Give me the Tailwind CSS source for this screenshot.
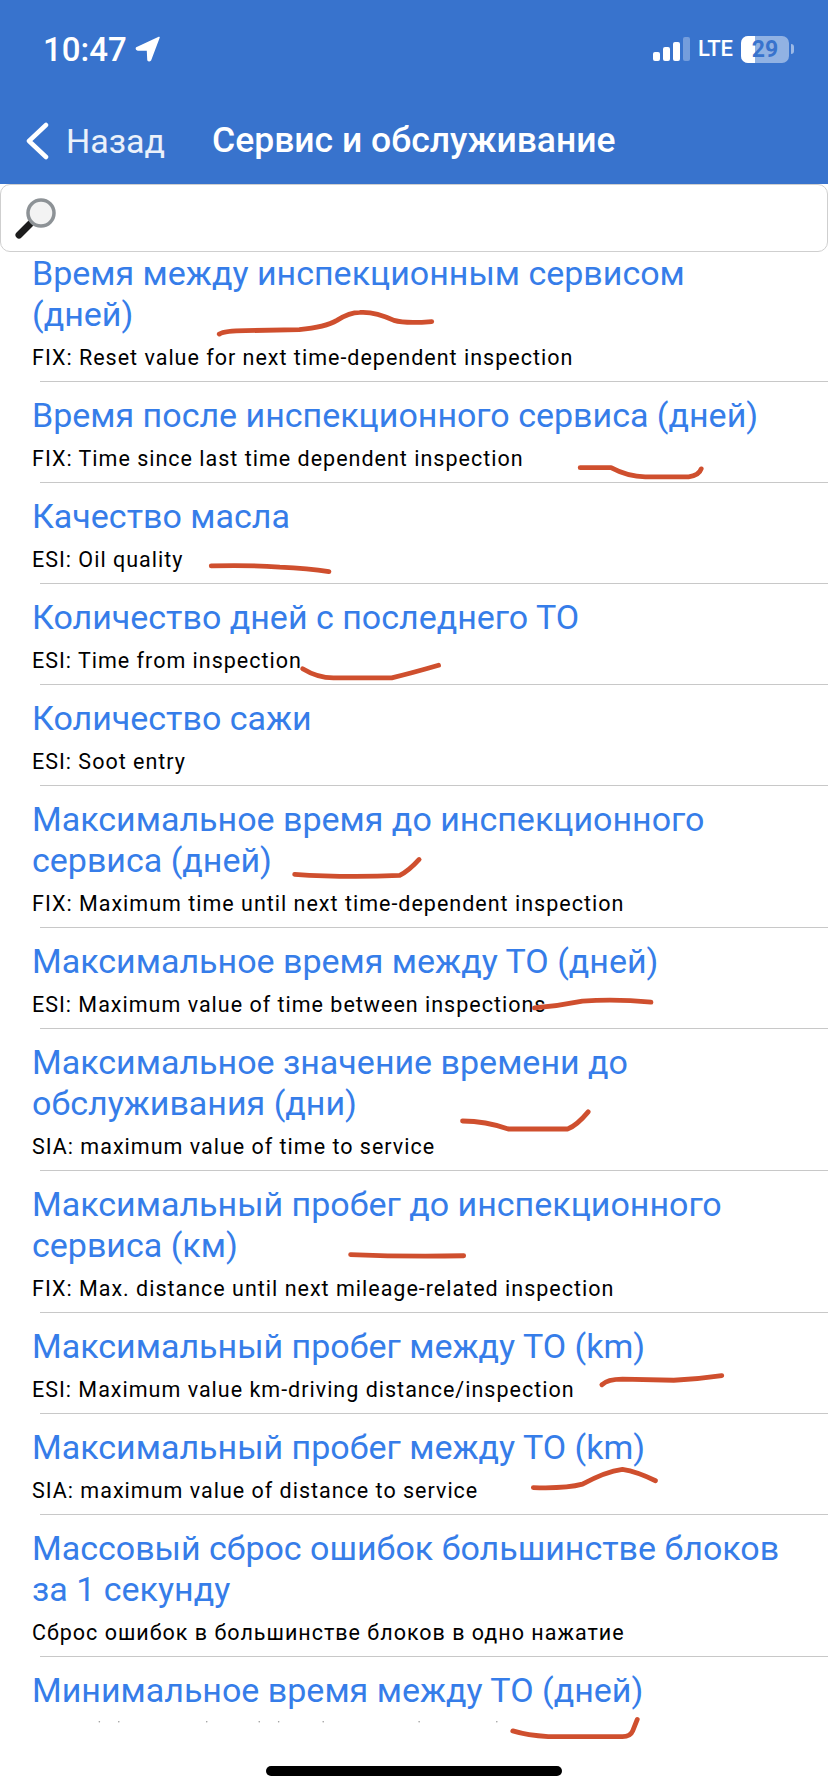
<!DOCTYPE html>
<html lang="ru">
<head>
  <meta charset="UTF-8" />
  <meta name="viewport" content="width=device-width, initial-scale=1.0"/>
  <title>Сервис и обслуживание</title>
  <script src="https://cdn.jsdelivr.net/npm/@tailwindcss/browser@4"></script>
</head>
<body class="bg-white font-['Roboto',sans-serif]">
<div class="relative w-[828px] h-[1792px] overflow-hidden bg-white">

  <!-- status bar + nav -->
  <header class="h-[184px] bg-[#3873cd] text-white flex flex-col">
    <div class="h-[98px] flex items-center justify-between pl-[43px] pr-[34px]">
      <div class="flex items-center gap-[8px]">
        <span class="text-[33px] font-medium leading-none">10:47</span>
        <svg width="26" height="26" viewBox="0 0 26 26"><path d="M24 1.5 L1.5 12 Q1 13.5 3 14 L12.5 14 L13 24 Q14 25.5 15.5 24 Z" fill="#fff" stroke="#fff" stroke-linejoin="round" stroke-width="1.5"/></svg>
      </div>
      <div class="flex items-center">
        <div class="flex items-end gap-[3px] h-[24px]">
          <div class="w-[7px] h-[9px] rounded-[2px] bg-white"></div>
          <div class="w-[7px] h-[14px] rounded-[2px] bg-white"></div>
          <div class="w-[7px] h-[19px] rounded-[2px] bg-white"></div>
          <div class="w-[7px] h-[24px] rounded-[2px] bg-white/30"></div>
        </div>
        <span class="ml-[8px] text-[22px] font-medium leading-none">LTE</span>
        <div class="relative ml-[8px] w-[48px] h-[27px] rounded-[7px] overflow-hidden bg-white/45 flex items-center justify-center">
          <div class="absolute left-0 top-0 bottom-0 w-[14px] bg-white"></div>
          <span class="relative text-[23px] font-bold leading-none text-[#3873cd]">29</span>
        </div>
        <div class="ml-[2px] w-[3px] h-[10px] rounded-r-full bg-white/50"></div>
      </div>
    </div>
    <nav class="flex items-center h-[50px] pl-[24px] mt-[18px]">
      <svg width="26" height="38" viewBox="0 0 26 38" fill="none"><path d="M22 3 L5 19 L22 35" stroke="#fff" stroke-width="4.5" stroke-linecap="round" stroke-linejoin="round"/></svg>
      <span class="ml-[16px] text-[34px] leading-none text-white/90">Назад</span>
      <span class="ml-[47px] text-[35.5px] font-medium leading-none">Сервис и обслуживание</span>
    </nav>
  </header>

  <!-- search -->
  <div class="h-[68px] bg-white border border-[#cfcfcf] rounded-[10px] flex items-center pl-[14px]">
    <svg width="44" height="44" viewBox="0 0 44 44">
      <path d="M15 28 L4 39" stroke="#1c1c1c" stroke-width="7" stroke-linecap="round"/>
      <circle cx="26" cy="17" r="13" fill="#f3f3f3" stroke="#8d9296" stroke-width="3.5"/>
    </svg>
  </div>

  <!-- list -->
  <ul class="pl-[40px]">
    <li class="pt-[1px] pb-[9px] border-b border-[#c8c8c8]">
      <p class="-ml-[8px] text-[34px] leading-[40.5px] text-[#367de9]">Время между инспекционным сервисом<br>(дней)</p>
      <p class="-ml-[8px] mt-[10px] text-[21.5px] leading-[28px] tracking-[1px] text-black">FIX: Reset value for next time-dependent inspection</p>
    </li>
    <li class="pt-[13px] pb-[9px] border-b border-[#c8c8c8]">
      <p class="-ml-[8px] text-[34px] leading-[40px] text-[#367de9]">Время после инспекционного сервиса (дней)</p>
      <p class="-ml-[8px] mt-[10px] text-[21.5px] leading-[28px] tracking-[1px] text-black">FIX: Time since last time dependent inspection</p>
    </li>
    <li class="pt-[13px] pb-[9px] border-b border-[#c8c8c8]">
      <p class="-ml-[8px] text-[34px] leading-[40px] text-[#367de9]">Качество масла</p>
      <p class="-ml-[8px] mt-[10px] text-[21.5px] leading-[28px] tracking-[1px] text-black">ESI: Oil quality</p>
    </li>
    <li class="pt-[13px] pb-[9px] border-b border-[#c8c8c8]">
      <p class="-ml-[8px] text-[34px] leading-[40px] text-[#367de9]">Количество дней с последнего ТО</p>
      <p class="-ml-[8px] mt-[10px] text-[21.5px] leading-[28px] tracking-[1px] text-black">ESI: Time from inspection</p>
    </li>
    <li class="pt-[13px] pb-[9px] border-b border-[#c8c8c8]">
      <p class="-ml-[8px] text-[34px] leading-[40px] text-[#367de9]">Количество сажи</p>
      <p class="-ml-[8px] mt-[10px] text-[21.5px] leading-[28px] tracking-[1px] text-black">ESI: Soot entry</p>
    </li>
    <li class="pt-[13px] pb-[9px] border-b border-[#c8c8c8]">
      <p class="-ml-[8px] text-[34px] leading-[40.5px] text-[#367de9]">Максимальное время до инспекционного<br>сервиса (дней)</p>
      <p class="-ml-[8px] mt-[10px] text-[21.5px] leading-[28px] tracking-[1px] text-black">FIX: Maximum time until next time-dependent inspection</p>
    </li>
    <li class="pt-[13px] pb-[9px] border-b border-[#c8c8c8]">
      <p class="-ml-[8px] text-[34px] leading-[40px] text-[#367de9]">Максимальное время между ТО (дней)</p>
      <p class="-ml-[8px] mt-[10px] text-[21.5px] leading-[28px] tracking-[1px] text-black">ESI: Maximum value of time between inspections</p>
    </li>
    <li class="pt-[13px] pb-[9px] border-b border-[#c8c8c8]">
      <p class="-ml-[8px] text-[34px] leading-[40.5px] text-[#367de9]">Максимальное значение времени до<br>обслуживания (дни)</p>
      <p class="-ml-[8px] mt-[10px] text-[21.5px] leading-[28px] tracking-[1px] text-black">SIA: maximum value of time to service</p>
    </li>
    <li class="pt-[13px] pb-[9px] border-b border-[#c8c8c8]">
      <p class="-ml-[8px] text-[34px] leading-[40.5px] text-[#367de9]">Максимальный пробег до инспекционного<br>сервиса (км)</p>
      <p class="-ml-[8px] mt-[10px] text-[21.5px] leading-[28px] tracking-[1px] text-black">FIX: Max. distance until next mileage-related inspection</p>
    </li>
    <li class="pt-[13px] pb-[9px] border-b border-[#c8c8c8]">
      <p class="-ml-[8px] text-[34px] leading-[40px] text-[#367de9]">Максимальный пробег между ТО (km)</p>
      <p class="-ml-[8px] mt-[10px] text-[21.5px] leading-[28px] tracking-[1px] text-black">ESI: Maximum value km-driving distance/inspection</p>
    </li>
    <li class="pt-[13px] pb-[9px] border-b border-[#c8c8c8]">
      <p class="-ml-[8px] text-[34px] leading-[40px] text-[#367de9]">Максимальный пробег между ТО (km)</p>
      <p class="-ml-[8px] mt-[10px] text-[21.5px] leading-[28px] tracking-[1px] text-black">SIA: maximum value of distance to service</p>
    </li>
    <li class="pt-[13px] pb-[9px] border-b border-[#c8c8c8]">
      <p class="-ml-[8px] text-[34px] leading-[40.5px] text-[#367de9]">Массовый сброс ошибок большинстве блоков<br>за 1 секунду</p>
      <p class="-ml-[8px] mt-[10px] text-[21.5px] leading-[28px] tracking-[1px] text-black">Сброс ошибок в большинстве блоков в одно нажатие</p>
    </li>
    <li class="pt-[13px]">
      <p class="-ml-[8px] text-[34px] leading-[40px] text-[#367de9]">Минимальное время между ТО (дней)</p>
    </li>
  </ul>

  <!-- red pen marks drawn over the screenshot, plus the specks left of the cut off last subtitle -->
  <svg class="absolute inset-0 pointer-events-none" width="828" height="1792" viewBox="0 0 725 1568" fill="none" stroke="#cf4f2e" stroke-width="4.2" stroke-linecap="round" stroke-linejoin="round">
    <path d="M192 292 Q197 289 215 289 L262 288 Q285 286 295 280 Q306 273 315 273 Q328 272 345 280 Q355 283 378 281"/>
    <path d="M508 409 L535 409 Q550 417 565 417 L603 417 Q612 416 614 410"/>
    <path d="M185 495 Q215 494 245 496 Q270 497 288 500"/>
    <path d="M265 585 Q278 593 292 593 L343 593 Q360 589 384 582"/>
    <path d="M258 765 Q300 768 350 766 Q358 762 367 752"/>
    <path d="M468 882 Q490 880 510 876 Q540 874 570 877"/>
    <path d="M405 981 Q425 981 445 988 L497 988 Q505 985 515 973"/>
    <path d="M307 1098 Q355 1100 406 1099"/>
    <path d="M527 1212 Q532 1207 545 1207 L590 1208 Q612 1207 632 1204"/>
    <path d="M467 1302 Q495 1303 510 1299 Q530 1288 545 1286 Q558 1288 574 1296"/>
    <path d="M449 1515 Q462 1519 480 1520 L545 1520 Q552 1520 554 1515 L558 1505"/>
    <g fill="#9a9a9a" stroke="none">
      <circle cx="87" cy="1507" r="0.7"/><circle cx="104" cy="1507" r="0.7"/><circle cx="181" cy="1507" r="0.7"/>
      <circle cx="227" cy="1507" r="0.7"/><circle cx="244" cy="1507" r="0.7"/><circle cx="283" cy="1507" r="0.7"/>
      <circle cx="367" cy="1507" r="0.7"/><circle cx="435" cy="1507" r="0.7"/>
    </g>
  </svg>

  <!-- home indicator -->
  <div class="absolute left-[266px] top-[1766px] w-[296px] h-[10px] rounded-full bg-black"></div>
</div>
</body>
</html>
